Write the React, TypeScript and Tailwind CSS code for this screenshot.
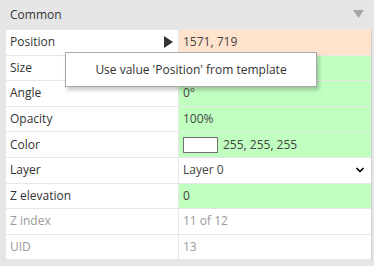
import { ChevronDown } from 'lucide-react';

type Row = {
    label: string;
    value: string;
    bg: string;
    muted?: boolean;
    arrow?: boolean;
    swatch?: boolean;
    select?: boolean;
};

const rows: Row[] = [
    { label: 'Position', value: '1571, 719', bg: 'bg-[#ffe3cc]', arrow: true },
    { label: 'Size', value: '', bg: 'bg-[#c0ffc0]' },
    { label: 'Angle', value: '0°', bg: 'bg-[#c0ffc0]' },
    { label: 'Opacity', value: '100%', bg: 'bg-[#c0ffc0]' },
    { label: 'Color', value: '255, 255, 255', bg: 'bg-[#c0ffc0]', swatch: true },
    { label: 'Layer', value: 'Layer 0', bg: 'bg-white', select: true },
    { label: 'Z elevation', value: '0', bg: 'bg-[#c0ffc0]' },
    { label: 'Z index', value: '11 of 12', bg: 'bg-white', muted: true },
    { label: 'UID', value: '13', bg: 'bg-white', muted: true },
];

export default function App() {
    return (
        <div className="relative w-[374px] h-[266px] overflow-hidden bg-[#e6e6e6] text-[12px] font-['Open_Sans',sans-serif] text-[#333]">
            {/* Header */}
            <div className="h-[30px] flex items-center justify-between pl-[10px] pr-[10px]">
                <span className="text-[#333]">Common</span>
                <svg width="11" height="9" viewBox="0 0 11 9" className="mb-[2px]">
                    <path d="M0 0 H11 L5.5 8 Z" fill="#a6a6a6" />
                </svg>
            </div>

            {/* Rows */}
            <div className="ml-[6px] mr-[2px] border-r border-[#d0d0d0]">
                {rows.map((r) => (
                    <div
                        key={r.label}
                        className="flex h-[25.6px] border-b border-[#e6e6e6]"
                    >
                        <div
                            className={`w-[173px] flex items-center justify-between pl-[4px] pr-[5px] bg-white border-r border-[#e6e6e6] ${r.muted ? 'text-[#9a9a9a]' : ''}`}
                        >
                            <span>{r.label}</span>
                            {r.arrow && (
                                <svg width="9" height="12" viewBox="0 0 9 12">
                                    <path d="M0 0 L9 6 L0 12 Z" fill="#333" />
                                </svg>
                            )}
                        </div>
                        <div
                            className={`flex-1 flex items-center pl-[4px] pr-[4px] ${r.bg} ${r.muted ? 'text-[#9a9a9a]' : 'text-[#444]'}`}
                        >
                            {r.swatch && (
                                <div className="w-[35px] h-[16px] bg-white border border-[#707070] mr-[5px] shrink-0" />
                            )}
                            <span className="flex-1">{r.value}</span>
                            {r.select && (
                                <ChevronDown size={12} strokeWidth={3.5} className="text-black mr-[1px]" />
                            )}
                        </div>
                    </div>
                ))}
            </div>

            {/* Tooltip */}
            <div className="absolute left-[65px] top-[52px] w-[252px] h-[35px] bg-white border border-[#a8a8a8] shadow-[2px_3px_4px_rgba(0,0,0,0.22)] flex items-center justify-center text-[#333]">
                Use value 'Position' from template
            </div>
        </div>
    );
}
